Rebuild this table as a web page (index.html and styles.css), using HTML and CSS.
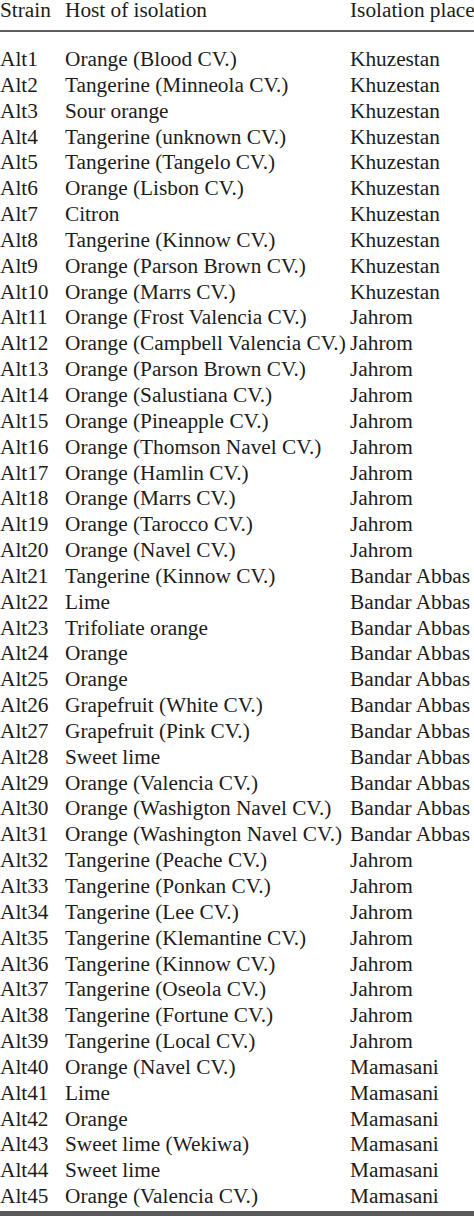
FILE: index.html
```html
<!DOCTYPE html>
<html lang="en">
<head>
<meta charset="utf-8">
<title>Strains</title>
<link rel="stylesheet" href="styles.css">
</head>
<body>
<div class="table">
  <div class="head">
    <div class="row">
      <span>Strain</span><span>Host of isolation</span><span>Isolation place</span>
    </div>
  </div>
  <div class="body">
    <div class="row"><span>Alt1</span><span>Orange (Blood CV.)</span><span>Khuzestan</span></div>
    <div class="row"><span>Alt2</span><span>Tangerine (Minneola CV.)</span><span>Khuzestan</span></div>
    <div class="row"><span>Alt3</span><span>Sour orange</span><span>Khuzestan</span></div>
    <div class="row"><span>Alt4</span><span>Tangerine (unknown CV.)</span><span>Khuzestan</span></div>
    <div class="row"><span>Alt5</span><span>Tangerine (Tangelo CV.)</span><span>Khuzestan</span></div>
    <div class="row"><span>Alt6</span><span>Orange (Lisbon CV.)</span><span>Khuzestan</span></div>
    <div class="row"><span>Alt7</span><span>Citron</span><span>Khuzestan</span></div>
    <div class="row"><span>Alt8</span><span>Tangerine (Kinnow CV.)</span><span>Khuzestan</span></div>
    <div class="row"><span>Alt9</span><span>Orange (Parson Brown CV.)</span><span>Khuzestan</span></div>
    <div class="row"><span>Alt10</span><span>Orange (Marrs CV.)</span><span>Khuzestan</span></div>
    <div class="row"><span>Alt11</span><span>Orange (Frost Valencia CV.)</span><span>Jahrom</span></div>
    <div class="row"><span>Alt12</span><span>Orange (Campbell Valencia CV.)</span><span>Jahrom</span></div>
    <div class="row"><span>Alt13</span><span>Orange (Parson Brown CV.)</span><span>Jahrom</span></div>
    <div class="row"><span>Alt14</span><span>Orange (Salustiana CV.)</span><span>Jahrom</span></div>
    <div class="row"><span>Alt15</span><span>Orange (Pineapple CV.)</span><span>Jahrom</span></div>
    <div class="row"><span>Alt16</span><span>Orange (Thomson Navel CV.)</span><span>Jahrom</span></div>
    <div class="row"><span>Alt17</span><span>Orange (Hamlin CV.)</span><span>Jahrom</span></div>
    <div class="row"><span>Alt18</span><span>Orange (Marrs CV.)</span><span>Jahrom</span></div>
    <div class="row"><span>Alt19</span><span>Orange (Tarocco CV.)</span><span>Jahrom</span></div>
    <div class="row"><span>Alt20</span><span>Orange (Navel CV.)</span><span>Jahrom</span></div>
    <div class="row"><span>Alt21</span><span>Tangerine (Kinnow CV.)</span><span>Bandar Abbas</span></div>
    <div class="row"><span>Alt22</span><span>Lime</span><span>Bandar Abbas</span></div>
    <div class="row"><span>Alt23</span><span>Trifoliate orange</span><span>Bandar Abbas</span></div>
    <div class="row"><span>Alt24</span><span>Orange</span><span>Bandar Abbas</span></div>
    <div class="row"><span>Alt25</span><span>Orange</span><span>Bandar Abbas</span></div>
    <div class="row"><span>Alt26</span><span>Grapefruit (White CV.)</span><span>Bandar Abbas</span></div>
    <div class="row"><span>Alt27</span><span>Grapefruit (Pink CV.)</span><span>Bandar Abbas</span></div>
    <div class="row"><span>Alt28</span><span>Sweet lime</span><span>Bandar Abbas</span></div>
    <div class="row"><span>Alt29</span><span>Orange (Valencia CV.)</span><span>Bandar Abbas</span></div>
    <div class="row"><span>Alt30</span><span>Orange (Washigton Navel CV.)</span><span>Bandar Abbas</span></div>
    <div class="row"><span>Alt31</span><span>Orange (Washington Navel CV.)</span><span>Bandar Abbas</span></div>
    <div class="row"><span>Alt32</span><span>Tangerine (Peache CV.)</span><span>Jahrom</span></div>
    <div class="row"><span>Alt33</span><span>Tangerine (Ponkan CV.)</span><span>Jahrom</span></div>
    <div class="row"><span>Alt34</span><span>Tangerine (Lee CV.)</span><span>Jahrom</span></div>
    <div class="row"><span>Alt35</span><span>Tangerine (Klemantine CV.)</span><span>Jahrom</span></div>
    <div class="row"><span>Alt36</span><span>Tangerine (Kinnow CV.)</span><span>Jahrom</span></div>
    <div class="row"><span>Alt37</span><span>Tangerine (Oseola CV.)</span><span>Jahrom</span></div>
    <div class="row"><span>Alt38</span><span>Tangerine (Fortune CV.)</span><span>Jahrom</span></div>
    <div class="row"><span>Alt39</span><span>Tangerine (Local CV.)</span><span>Jahrom</span></div>
    <div class="row"><span>Alt40</span><span>Orange (Navel CV.)</span><span>Mamasani</span></div>
    <div class="row"><span>Alt41</span><span>Lime</span><span>Mamasani</span></div>
    <div class="row"><span>Alt42</span><span>Orange</span><span>Mamasani</span></div>
    <div class="row"><span>Alt43</span><span>Sweet lime (Wekiwa)</span><span>Mamasani</span></div>
    <div class="row"><span>Alt44</span><span>Sweet lime</span><span>Mamasani</span></div>
    <div class="row"><span>Alt45</span><span>Orange (Valencia CV.)</span><span>Mamasani</span></div>
  </div>
</div>
</body>
</html>
```
FILE: styles.css
```css
html, body {
  margin: 0;
  padding: 0;
  background: #ffffff;
}
body {
  font-family: "Liberation Serif", "Times New Roman", serif;
  font-size: 21.3px;
  color: #1c1c1c;
  width: 474px;
  overflow: hidden;
}
.table {
  display: flex;
  flex-direction: column;
}
.row {
  display: grid;
  grid-template-columns: 65px 285px 1fr;
  white-space: nowrap;
}
.head {
  border-bottom: 2px solid #5e5e5e;
  height: 30px;
}
.head .row {
  line-height: 20px;
}
.body {
  padding-top: 15px;
  padding-bottom: 1px;
  border-bottom: 6px solid #5a5a5a;
}
.body .row {
  line-height: 25.85px;
  height: 25.85px;
}
```
